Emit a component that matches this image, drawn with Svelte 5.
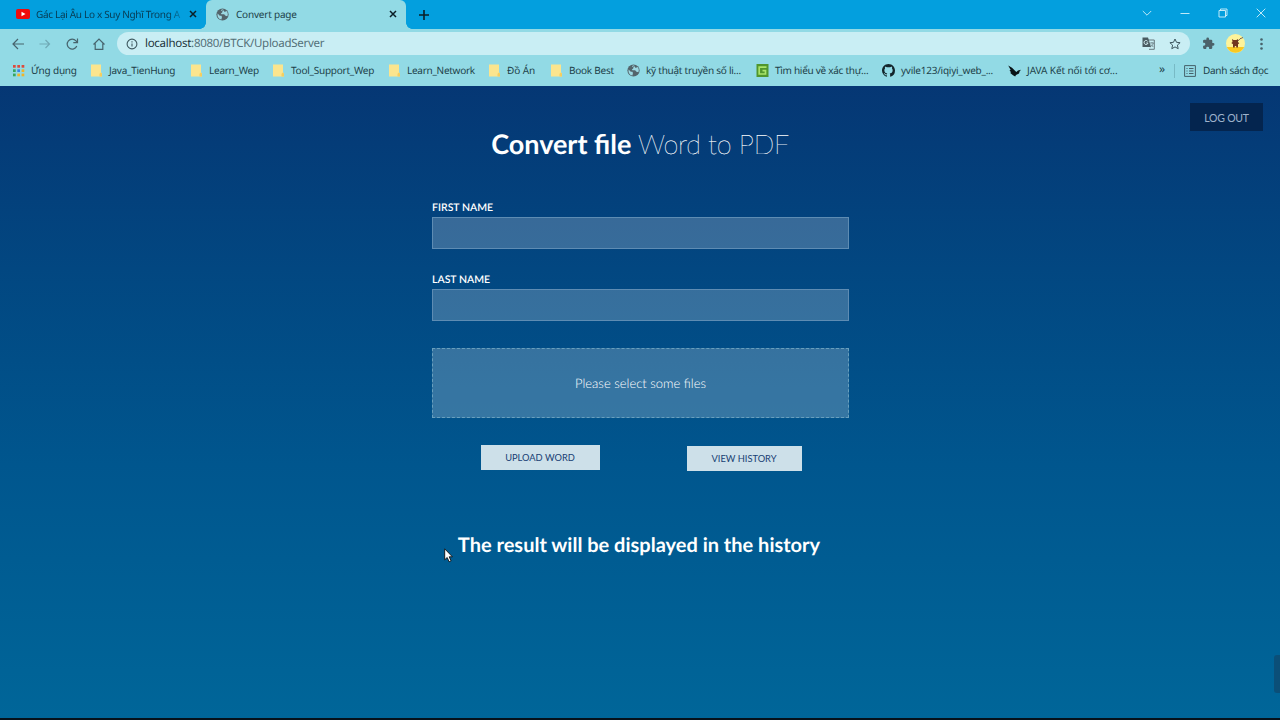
<script>
	let firstName = $state("");
	let lastName = $state("");

	// w = full width of the entry, sp = letter spacing of its title
	const bookmarks = [
		{ icon: "apps", title: "Ứng dụng", w: 78, sp: -0.2 },
		{ icon: "folder", title: "Java_TienHung", w: 100, sp: -0.25 },
		{ icon: "folder", title: "Learn_Wep", w: 82, sp: -0.25 },
		{ icon: "folder", title: "Tool_Support_Wep", w: 116, sp: -0.25 },
		{ icon: "folder", title: "Learn_Network", w: 100, sp: -0.28 },
		{ icon: "folder", title: "Đồ Án", w: 62, sp: -0.1 },
		{ icon: "folder", title: "Book Best", w: 77, sp: -0.25 },
		{ icon: "globe", title: "kỹ thuật truyền số li...", w: 129, sp: -0.25 },
		{ icon: "green", title: "Tìm hiểu về xác thự...", w: 126, sp: -0.28 },
		{ icon: "github", title: "yvile123/iqiyi_web_...", w: 126, sp: -0.25 },
		{ icon: "bird", title: "JAVA Kết nối tới cơ...", w: 120, sp: -0.1 },
	];
	const appColors = ["#dd4b3e", "#dd4b3e", "#dd4b3e", "#35a660", "#3c83e8", "#f0b429", "#35a660", "#f0b429", "#f0b429"];
</script>

{#snippet globe()}
	<svg class="globe" viewBox="0 0 24 24">
		<circle cx="12" cy="12" r="11.3" fill="#53646b" />
		<path d="M3 10l4 4.300h3l1 2.500-1 4.500c-5-.8-8-5.500-7-11.300zM9 3.500l4-1 1 2-2.500 2v2l-2.500 1.500 1 1.500h5l2.500 3 3.500.5c1.500-3 1-8-2.500-10l-1.500 2.500-2-1-.5-2c-2-.8-4-.3-4.500 1z" fill="#9cd8e2" />
	</svg>
{/snippet}

<div class="window">
	<div class="tabs">
		<div class="tab">
			<svg class="yt" viewBox="0 0 14 10"><rect width="14" height="10" rx="2" fill="#f00b0b" /><path d="M5.500 2.700v4.600L9.500 5z" fill="#fff" /></svg>
			<span class="tabtitle faded">Gác Lại Âu Lo x Suy Nghĩ Trong A</span>
			<svg class="x" viewBox="0 0 8 8"><path d="M1 1l6 6M7 1L1 7" /></svg>
		</div>
		<div class="tab active">
			{@render globe()}
			<span class="tabtitle">Convert page</span>
			<svg class="x" viewBox="0 0 8 8"><path d="M1 1l6 6M7 1L1 7" /></svg>
		</div>
		<svg class="plus" viewBox="0 0 10 10"><path d="M5 0v10M0 5h10" /></svg>
		<div class="winbuttons">
			<svg viewBox="0 0 10 10"><path d="M.8 3L5 7.200 9.200 3" /></svg>
			<svg viewBox="0 0 10 10"><path d="M.5 5.500h9" /></svg>
			<svg viewBox="0 0 10 10"><path d="M1 2.500h6.500V9H1zM2.500 2.500V1H9v6.500H7.500" /></svg>
			<svg viewBox="0 0 10 10"><path d="M.7 .7l8.600 8.600M9.300 .7L.7 9.300" /></svg>
		</div>
	</div>

	<div class="toolbar">
		<svg class="nav" viewBox="0 0 14 14"><path d="M13 7H2M7 2L2 7l5 5" /></svg>
		<svg class="nav dim" viewBox="0 0 14 14"><path d="M1.500 7h10M7.500 3l4 4-4 4" /></svg>
		<svg class="nav" viewBox="0 0 14 14"><path d="M11.800 9A5 5 0 1 1 11 3.800L12.300 5.500M12.500 1.500v4.200H8.300" /></svg>
		<svg class="nav" viewBox="0 0 14 14"><path d="M1.500 7.500L7 2l5.500 5.500M3.200 6.500v5.800h7.600V6.500" /></svg>
		<div class="address">
			<svg class="info" viewBox="0 0 12 12"><circle cx="6" cy="6" r="4.900" /><path d="M6 5.400v3.200M6 3.200v1.200" /></svg>
			<span class="url">localhost<i>:8080/BTCK/UploadServer</i></span>
			<svg class="translate" viewBox="0 0 13 13">
				<path d="M5 3h7.300v9.300H7" fill="none" stroke="#66777d" />
				<path d="M.5 .5H6L9 10H.5z" fill="#4a5b61" />
				<path d="M5.800 4.500A2 2 0 1 0 6 6H4.300" fill="none" stroke="#d8f2f6" />
				<path d="M8 6h4M10 5v1M11.300 6c-.5 2-1.500 3-3 4M9 7.500l2.300 2.500" fill="none" stroke="#66777d" stroke-width=".8" />
			</svg>
			<svg class="star" viewBox="0 0 12 12"><path d="M6 1l1.500 3.300 3.600.4-2.700 2.400.8 3.600L6 8.900l-3.200 1.800.8-3.600L.9 4.700l3.600-.4z" /></svg>
		</div>
		<svg class="puzzle" viewBox="0 0 24 24"><path d="M20.500 11H19V7a2 2 0 0 0-2-2h-4V3.500a2.500 2.500 0 0 0-5 0V5H4a2 2 0 0 0-2 2v3.800h1.500a2.700 2.700 0 0 1 0 5.400H2V20a2 2 0 0 0 2 2h3.800v-1.500a2.700 2.700 0 0 1 5.400 0V22H17a2 2 0 0 0 2-2v-4h1.500a2.500 2.500 0 0 0 0-5z" fill="#4a626a" /></svg>
		<svg class="avatar" viewBox="0 0 19 19">
			<circle cx="9.500" cy="9.500" r="9.500" fill="#fdf39a" />
			<path d="M.8 13h17.400a9.500 9.500 0 0 1-17.400 0z" fill="#f9c823" />
			<path d="M6 5l1.500 1h3L12 5v3l1.300 1.300-1.300 1v3.200h-1.800v-1.500H8.800v1.500H7v-3.200L5.300 9 6.500 8z" fill="#70351f" />
			<path d="M11.500 7.500l2.500-2.700 3-1.300" fill="none" stroke="#58433a" stroke-width=".8" />
		</svg>
		<svg class="dots" viewBox="0 0 3 12"><circle cx="1.500" cy="1.500" r="1.300" /><circle cx="1.500" cy="6" r="1.300" /><circle cx="1.500" cy="10.500" r="1.300" /></svg>
	</div>

	<div class="bookmarks">
		{#each bookmarks as b}
			<div class="bookmark" style="width: {b.w}px; letter-spacing: {b.sp}px">
				<div class="bicon">
					{#if b.icon == "apps"}
						<svg viewBox="0 0 13 13">
							{#each appColors as c, i}
								<rect x={1 + (i % 3) * 4.3} y={1 + Math.floor(i / 3) * 4.3} width="2.700" height="2.700" fill={c} />
							{/each}
						</svg>
					{:else if b.icon == "folder"}
						<svg viewBox="0 0 13 13"><path d="M1 .5h10v8l1 1v3H1z" fill="#fbe58e" /><path d="M9.500 12.500V9.800l1.500-1.300 1 1v3z" fill="#f3ce61" /></svg>
					{:else if b.icon == "globe"}
						{@render globe()}
					{:else if b.icon == "green"}
						<svg viewBox="0 0 13 13"><path d="M.5 0h12v13H.5z" fill="#50962d" /><path d="M10.500 3.200H3.200v6.800h6.300V6.700H6.500" fill="none" stroke="#a9e46a" stroke-width="1.700" /></svg>
					{:else if b.icon == "github"}
						<svg viewBox="0 0 16 16"><path fill="#13252b" d="M8 0C3.580 0 0 3.580 0 8c0 3.540 2.290 6.530 5.470 7.590.4.070.55-.17.55-.38 0-.19-.01-.82-.01-1.490-2.010.37-2.530-.49-2.690-.94-.09-.23-.48-.94-.82-1.130-.28-.15-.68-.52-.01-.53.63-.01 1.080.58 1.230.82.72 1.210 1.870.87 2.330.66.070-.52.28-.87.510-1.070-1.780-.2-3.640-.89-3.640-3.950 0-.87.310-1.590.82-2.150-.08-.2-.36-1.020.080-2.120 0 0 .67-.21 2.200.82.64-.18 1.320-.27 2-.27s1.360.090 2 .27c1.530-1.040 2.200-.82 2.200-.82.44 1.100.16 1.920.080 2.120.510.56.82 1.270.82 2.150 0 3.070-1.870 3.750-3.650 3.950.29.25.54.73.54 1.480 0 1.070-.01 1.930-.01 2.200 0 .21.15.46.55.38A8.010 8.010 0 0 0 16 8c0-4.420-3.580-8-8-8z" /></svg>
					{:else}
						<svg viewBox="0 0 13 13"><path d="M.2 1.500l3.800 2.200L8.300 8l1.700-1.500 3-.8-1.300 1.500-.7 2.300-3 1.500-.8 1.500-2.200-1.200-3-2.600 1.200-.1L1.500 6.300l1.200-.2z" fill="#091316" /></svg>
					{/if}
				</div>
				<span>{b.title}</span>
			</div>
		{/each}
		<span class="more">»</span>
		<div class="reading">
			<svg viewBox="0 0 12 12"><path d="M.6 .6h10.800v10.800H.6zM2.500 3.500h1M5 3.500h4.500M2.500 6h1M5 6h4.500M2.500 8.500h1M5 8.500h4.500" /></svg>
			<span>Danh sách đọc</span>
		</div>
	</div>

	<main>
		<button class="logout">LOG OUT</button>
		<h1>Convert file <span>Word to PDF</span></h1>
		<form>
			<label for="first">FIRST NAME</label>
			<input id="first" bind:value={firstName} />
			<label for="last">LAST NAME</label>
			<input id="last" bind:value={lastName} />
			<div class="drop">Please select some files</div>
			<div class="actions">
				<button type="button" class="upload">UPLOAD WORD</button>
				<button type="button" class="history">VIEW HISTORY</button>
			</div>
		</form>
		<h2>The result will be displayed in the history</h2>
		<div class="thumb"></div>
	</main>
	<svg class="cursor" viewBox="0 0 9 15"><path d="M.7 .8v11l2.500-2.300 1.900 4.300 2-.9-1.900-4.100h3.200z" fill="#fff" stroke="#111" stroke-width=".9" /></svg>
</div>

<style>
	:global(body) {
		margin: 0;
		overflow: hidden;
	}
	* {
		box-sizing: border-box;
	}
	svg {
		display: block;
		flex-shrink: 0;
	}
	.window {
		position: relative;
		width: 1280px;
		height: 720px;
		display: flex;
		flex-direction: column;
		font-family: "Noto Sans", "Open Sans", sans-serif;
		font-size: 10px;
		text-rendering: geometricPrecision;
		color: #203f49;
		background: #92dae5;
	}

	/* tab strip */
	.tabs {
		display: flex;
		align-items: center;
		height: 29px;
		background: #039fde;
	}
	.tab {
		display: flex;
		align-items: center;
		width: 206px;
		height: 29px;
		padding: 0 9px 1px 16px;
		color: #083b52;
	}
	.tab.active {
		position: relative;
		width: 200px;
		padding-left: 10px;
		background: #92dae5;
		border-radius: 6px 6px 0 0;
		color: #203f49;
	}
	.tab.active::before,
	.tab.active::after {
		content: "";
		position: absolute;
		bottom: 0;
		width: 6px;
		height: 6px;
	}
	.tab.active::before {
		left: -6px;
		background: radial-gradient(circle at 0 0, transparent 5.5px, #92dae5 6px);
	}
	.tab.active::after {
		right: -6px;
		background: radial-gradient(circle at 100% 0, transparent 5.5px, #92dae5 6px);
	}
	.yt {
		width: 14px;
		height: 10px;
		margin-right: 6px;
	}
	.tabtitle {
		flex: 1;
		white-space: nowrap;
		letter-spacing: -0.2px;
	}
	.faded {
		max-width: 148px;
		margin-right: auto;
		letter-spacing: -0.32px;
		mask-image: linear-gradient(to right, #000 132px, transparent 152px);
	}
	.globe {
		width: 13px;
		height: 13px;
	}
	.tab .globe {
		margin-right: 7px;
	}
	.x {
		width: 8px;
		height: 8px;
		fill: none;
		stroke: #0b1f27;
		stroke-width: 1.5;
	}
	.plus {
		width: 10px;
		height: 10px;
		margin-left: 13px;
		stroke: #0b1f27;
		stroke-width: 1.6;
	}
	.winbuttons {
		display: flex;
		gap: 28px;
		margin-left: auto;
		padding: 0 14px 4px 0;
	}
	.winbuttons svg {
		width: 10px;
		height: 10px;
		fill: none;
		stroke: #d5f2fb;
		stroke-width: 0.9;
	}

	/* toolbar */
	.toolbar {
		display: flex;
		align-items: center;
		height: 29px;
		padding-left: 11px;
	}
	.nav {
		width: 14px;
		height: 14px;
		margin-right: 13px;
		fill: none;
		stroke: #47646d;
		stroke-width: 1.2;
	}
	.nav.dim {
		stroke: #6fa9b5;
	}
	.address {
		display: flex;
		align-items: center;
		width: 1073px;
		height: 23px;
		margin-left: -2px;
		padding: 0 9px;
		border-radius: 12px;
		background: #c9eef4;
	}
	.info {
		width: 12px;
		height: 12px;
		margin-right: 7px;
		fill: none;
		stroke: #3f5960;
		stroke-width: 1.1;
	}
	.url {
		flex: 1;
		font-size: 11.5px;
		letter-spacing: -0.28px;
		color: #1d343b;
	}
	.url i {
		font-style: normal;
		color: #547078;
	}
	.translate {
		width: 13px;
		height: 13px;
		margin-right: 14px;
	}
	.star {
		width: 12px;
		height: 12px;
		fill: none;
		stroke: #3c565e;
	}
	.puzzle {
		width: 13px;
		height: 13px;
		margin-left: 12px;
	}
	.avatar {
		width: 19px;
		height: 19px;
		margin-left: 11px;
	}
	.dots {
		width: 3px;
		height: 12px;
		margin-left: 15px;
		fill: #47626a;
	}

	/* bookmarks bar */
	.bookmarks {
		display: flex;
		align-items: center;
		height: 28px;
		padding: 0 0 3px 12px;
		white-space: nowrap;
	}
	.bookmark {
		display: flex;
		align-items: center;
		flex-shrink: 0;
	}
	.bookmark span,
	.reading span {
		padding-bottom: 2px;
	}
	.bicon {
		width: 13px;
		margin-right: 6px;
	}
	.bicon svg {
		width: 13px;
		height: 13px;
	}
	.more {
		width: 46px;
		padding: 0 0 3px 31px;
		font-size: 12px;
		line-height: 14px;
	}
	.reading {
		display: flex;
		align-items: center;
		gap: 7px;
		height: 14px;
		padding-left: 9px;
		border-left: 1px solid #78bac5;
		letter-spacing: -0.28px;
	}
	.reading svg {
		width: 12px;
		height: 12px;
		fill: none;
		stroke: #456069;
	}

	/* page */
	main {
		position: relative;
		flex: 1;
		display: flex;
		flex-direction: column;
		align-items: center;
		background: linear-gradient(#053774, #024781 29%, #00568e 60%, #006699);
		border-bottom: 2px solid #06121b;
		font-family: Lato, sans-serif;
		color: #fff;
	}
	button {
		border: 0;
		padding: 0;
		font-family: Lato, sans-serif;
	}
	.logout {
		align-self: flex-end;
		width: 73px;
		height: 28px;
		margin: 17px 17px 0 0;
		padding-top: 2px;
		background: #04254f;
		color: #9fb3cc;
		font-size: 10.5px;
		letter-spacing: -0.2px;
	}
	h1 {
		height: 34px;
		margin: -4px 0 0;
		font-size: 27px;
		line-height: 34px;
		font-weight: 700;
		white-space: nowrap;
	}
	h1 span {
		font-weight: 100;
		letter-spacing: -0.25px;
		-webkit-text-stroke: 0.2px #fff;
	}
	form {
		display: flex;
		flex-direction: column;
		width: 417px;
		margin: 40px 0 0 1px;
	}
	label {
		height: 16px;
		font-size: 10.5px;
		line-height: 14px;
		font-weight: 600;
	}
	input {
		height: 32px;
		margin-bottom: 24px;
		border: 1px solid #5e8cb3;
		background: rgba(255, 255, 255, 0.21);
		outline: none;
	}
	.drop {
		height: 70px;
		margin-top: 3px;
		border: 1.5px dashed #689fbd;
		background: rgba(255, 255, 255, 0.21);
		font-size: 13px;
		font-weight: 300;
		line-height: 69px;
		text-align: center;
	}
	.actions {
		display: flex;
		align-items: flex-start;
		gap: 87px;
		padding: 27px 0 0 48.5px;
	}
	.actions button {
		height: 25px;
		background: #cde0e9;
		color: #173e73;
		font-size: 9.3px;
	}
	.upload {
		width: 119px;
	}
	.actions .history {
		width: 115px;
		margin-top: 1px;
	}
	h2 {
		margin: 60px 0 0 -2px;
		font-size: 20px;
		line-height: 28px;
		font-weight: 700;
	}
	.thumb {
		position: absolute;
		right: 0;
		top: 569px;
		width: 6px;
		height: 38px;
		border-radius: 3px 0 0 3px;
		background: #0b4f78;
	}
	.cursor {
		position: absolute;
		left: 444px;
		top: 548px;
		width: 9px;
		height: 15px;
	}
</style>
